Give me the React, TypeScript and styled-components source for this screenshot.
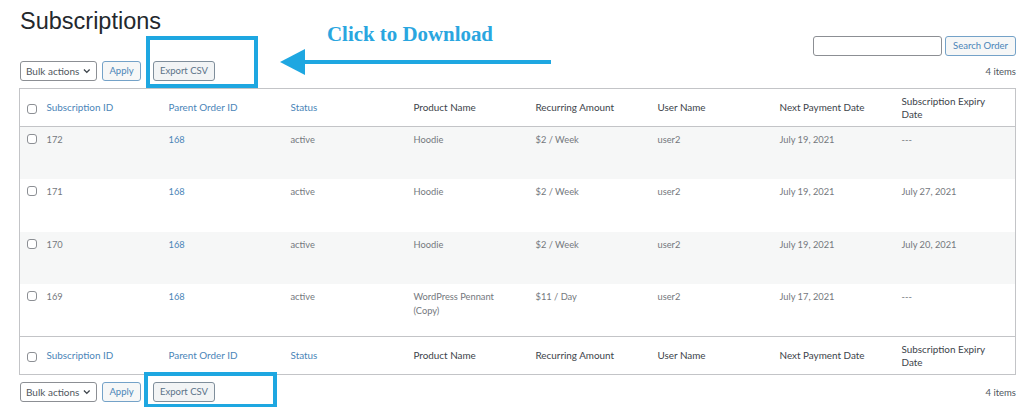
import React from "react";
import styled, { createGlobalStyle } from "styled-components";

const Global = createGlobalStyle`
  html, body { margin: 0; padding: 0; background: #fff; }
  body { font-family: Lato, "Open Sans", Arial, sans-serif; color: #3c434a; }
  * { box-sizing: border-box; }
`;

const Page = styled.div`
  position: relative;
  width: 1024px;
  height: 407px;
  overflow: hidden;
  padding: 6px 8px 0 20px;
`;

const Title = styled.h1`
  margin: 0;
  height: 30px;
  font-family: "Liberation Sans", Arial, sans-serif;
  font-weight: 400;
  font-size: 23.5px;
  line-height: 30px;
  color: #23282d;
`;

const SearchRow = styled.div`
  display: flex;
  justify-content: flex-end;
  gap: 3px;
  height: 20px;
`;

const SearchInput = styled.div`
  width: 129px;
  height: 20px;
  border: 1px solid #8c8f94;
  border-radius: 3px;
  background: #fff;
`;

const Button = styled.button<{ $tone?: "blue" | "grey" }>`
  height: 20px;
  padding: 0 7px;
  border-radius: 3px;
  font-family: Lato, Arial, sans-serif;
  font-size: 9.5px;
  line-height: 18px;
  white-space: nowrap;
  cursor: pointer;
  background: ${(p) => (p.$tone === "grey" ? "#f2f4f5" : "#f6f7f7")};
  border: 1px solid ${(p) => (p.$tone === "grey" ? "#7f8e9b" : "#74a2c8")};
  color: ${(p) => (p.$tone === "grey" ? "#5a7288" : "#4a85b8")};
`;

const Toolbar = styled.div<{ $top: number }>`
  display: flex;
  align-items: center;
  height: 20px;
  margin-top: ${(p) => p.$top}px;
`;

const Select = styled.div`
  display: flex;
  align-items: center;
  gap: 4px;
  width: 77px;
  height: 20px;
  padding: 0 5px;
  border: 1px solid #8c8f94;
  border-radius: 3px;
  font-size: 10px;
  white-space: nowrap;
  color: #50575e;
  background: #fff;
`;

const ToolGroup = styled.div`
  display: flex;
  align-items: center;
`;

const ApplyButton = styled(Button)`
  margin-left: 5px;
  width: 39px;
  padding: 0;
`;

const ExportButton = styled(Button)`
  margin-left: 12px;
  width: 62px;
  padding: 0;
`;

const Count = styled.div`
  margin-left: auto;
  font-size: 9.5px;
  color: #50575e;
`;

const Table = styled.table`
  margin-top: 7px;
  width: 996px;
  margin-left: -1px;
  border-collapse: collapse;
  table-layout: fixed;
  border: 1px solid #c3c4c7;
`;

const HeadRow = styled.tr<{ $foot?: boolean }>`
  height: 38px;
  ${(p) => (p.$foot ? "border-top: 1px solid #c3c4c7;" : "border-bottom: 1px solid #c3c4c7;")}
`;

const Th = styled.th<{ $link?: boolean }>`
  padding: 0 8px;
  text-align: left;
  font-weight: 400;
  font-size: 9.9px;
  line-height: 13px;
  vertical-align: middle;
  color: ${(p) => (p.$link ? "#4a85b8" : "#3c434a")};
`;

const CheckCell = styled.td<{ $head?: boolean }>`
  padding: ${(p) => (p.$head ? "3px 0 0 7px" : "7px 0 0 7px")};
  vertical-align: ${(p) => (p.$head ? "middle" : "top")};
`;

const Check = styled.span`
  display: block;
  width: 10px;
  height: 10px;
  border: 1px solid #8c8f94;
  border-radius: 3px;
  background: #fff;
`;

const Row = styled.tr<{ $alt: boolean }>`
  height: 52.5px;
  background: ${(p) => (p.$alt ? "#f6f7f7" : "#fff")};
`;

const Td = styled.td<{ $link?: boolean }>`
  padding: 6px 8px 0;
  vertical-align: top;
  font-size: 9.3px;
  line-height: 14px;
  color: ${(p) => (p.$link ? "#4a85b8" : "#74787d")};
`;

const Annot = styled.div<{ $l: number; $t: number; $w: number; $h: number }>`
  position: absolute;
  left: ${(p) => p.$l}px;
  top: ${(p) => p.$t}px;
  width: ${(p) => p.$w}px;
  height: ${(p) => p.$h}px;
  border: 4px solid #1ea7e1;
  pointer-events: none;
`;

const Callout = styled.div`
  position: absolute;
  left: 327px;
  top: 22px;
  font-family: "Liberation Serif", "Times New Roman", serif;
  font-weight: 700;
  font-size: 20.9px;
  color: #2aa6df;
`;

const Arrow = styled.svg`
  position: absolute;
  left: 278px;
  top: 48px;
`;

const cols = [19, 122, 122, 123, 122, 122, 122, 122, 122];

const headers: { label: string; link?: boolean }[] = [
  { label: "Subscription ID", link: true },
  { label: "Parent Order ID", link: true },
  { label: "Status", link: true },
  { label: "Product Name" },
  { label: "Recurring Amount" },
  { label: "User Name" },
  { label: "Next Payment Date" },
  { label: "Subscription Expiry Date" },
];

const rows = [
  ["172", "168", "active", "Hoodie", "$2 / Week", "user2", "July 19, 2021", "---"],
  ["171", "168", "active", "Hoodie", "$2 / Week", "user2", "July 19, 2021", "July 27, 2021"],
  ["170", "168", "active", "Hoodie", "$2 / Week", "user2", "July 19, 2021", "July 20, 2021"],
  ["169", "168", "active", "WordPress Pennant (Copy)", "$11 / Day", "user2", "July 17, 2021", "---"],
];

const Chevron = () => (
  <svg width="8" height="6" viewBox="0 0 8 6">
    <path d="M1 1.5 L4 4.5 L7 1.5" fill="none" stroke="#3c434a" strokeWidth="1.4" />
  </svg>
);

const Bar = ({ top }: { top: number }) => (
  <Toolbar $top={top}>
    <ToolGroup>
      <Select>
        Bulk actions <Chevron />
      </Select>
      <ApplyButton>Apply</ApplyButton>
      <ExportButton $tone="grey">Export CSV</ExportButton>
    </ToolGroup>
    <Count>4 items</Count>
  </Toolbar>
);

const HeaderRow = ({ foot }: { foot?: boolean }) => (
  <HeadRow $foot={foot}>
    <CheckCell $head>
      <Check />
    </CheckCell>
    {headers.map((h) => (
      <Th key={h.label} $link={h.link}>
        {h.label}
      </Th>
    ))}
  </HeadRow>
);

export default function App() {
  return (
    <>
      <Global />
      <Page>
        <Title>Subscriptions</Title>
        <SearchRow>
          <SearchInput />
          <Button>Search Order</Button>
        </SearchRow>
        <Bar top={5} />
        <Table>
          <colgroup>
            {cols.map((w, i) => (
              <col key={i} style={{ width: w }} />
            ))}
          </colgroup>
          <thead>
            <HeaderRow />
          </thead>
          <tbody>
            {rows.map((r, i) => (
              <Row key={r[0]} $alt={i % 2 === 0}>
                <CheckCell>
                  <Check />
                </CheckCell>
                {r.map((c, j) => (
                  <Td key={j} $link={j === 1}>
                    {c}
                  </Td>
                ))}
              </Row>
            ))}
          </tbody>
          <tfoot>
            <HeaderRow foot />
          </tfoot>
        </Table>
        <Bar top={7} />

        <Annot $l={146} $t={36} $w={112} $h={52} />
        <Annot $l={144} $t={372} $w={133} $h={36} />
        <Callout>Click to Download</Callout>
        <Arrow width="276" height="28" viewBox="0 0 276 28">
          <polygon points="2,14 27,1 27,27" fill="#1ea7e1" />
          <rect x="25" y="12" width="248" height="4" fill="#1ea7e1" />
        </Arrow>
      </Page>
    </>
  );
}
